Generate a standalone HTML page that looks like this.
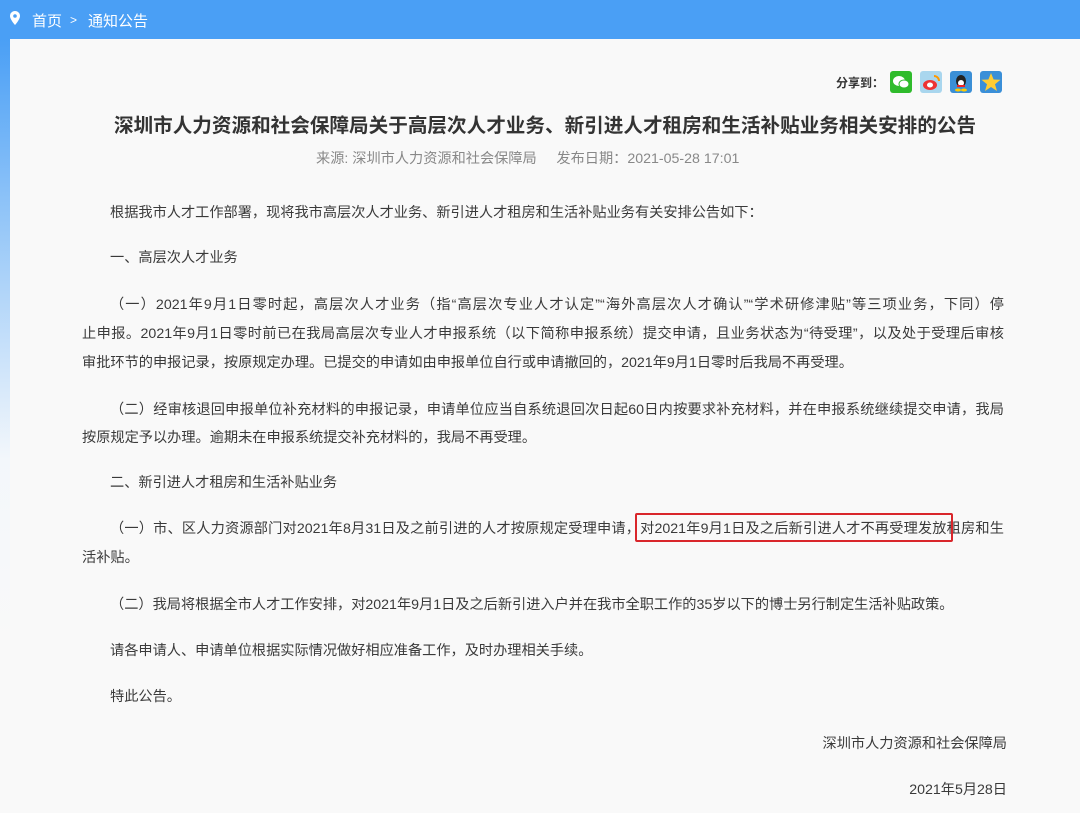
<!DOCTYPE html>
<html><head><meta charset="utf-8"><style>
body{margin:0;width:1080px;height:813px;overflow:hidden;background:#f9f9f9;font-family:"Liberation Sans","Noto Sans CJK SC",sans-serif;position:relative;color:#333}
.hdr{position:absolute;left:0;top:0;width:1080px;height:39px;background:#4a9ff5;color:#fff;font-size:15px}
.strip{position:absolute;left:0;top:39px;width:10px;height:774px;background:linear-gradient(#4a9ff5,#8cc2f8 160px,#f3f7fb 420px,#f9f9f9 600px)}
.l{position:absolute;font-size:14.2px;line-height:29px;white-space:nowrap;color:#3a3a3a;margin-top:2px}
.f{left:82px;width:922px;text-align:justify;text-align-last:justify}
.i{left:110px}
.ico{position:absolute;top:71px;width:22px;height:22px;border-radius:3px}
</style></head><body>
<div class="hdr">
<svg style="position:absolute;left:10px;top:11px" width="10" height="14" viewBox="0 0 10 14"><path d="M5 0C2.2 0 0 2.2 0 5c0 3.5 5 9 5 9s5-5.5 5-9C10 2.2 7.8 0 5 0z" fill="#fff"/><circle cx="5" cy="5" r="1.8" fill="#4a9ff5"/></svg>
<span style="position:absolute;left:32px;top:10px">首页</span>
<span style="position:absolute;left:70px;top:13px;font-size:12px">&gt;</span>
<span style="position:absolute;left:88px;top:10px">通知公告</span>
</div>
<div class="strip"></div>
<div style="position:absolute;left:836px;top:74px;font-size:12px;font-weight:bold;color:#333">分享到：</div>
<div class="ico" style="left:890px;background:#2fbb2c"><svg width="22" height="22"><ellipse cx="9" cy="10" rx="6" ry="5" fill="#fff"/><ellipse cx="14" cy="13" rx="5" ry="4" fill="#fff" stroke="#2fbb2c"/></svg></div>
<div class="ico" style="left:920px;background:#a9d6ee"><svg width="22" height="22"><ellipse cx="10" cy="14" rx="7" ry="5" fill="#e33"/><ellipse cx="10" cy="14" rx="3" ry="2.5" fill="#fff"/><path d="M14 5a5 5 0 0 1 5 5" stroke="#f90" stroke-width="2" fill="none"/></svg></div>
<div class="ico" style="left:950px;background:#3b8fd6"><svg width="22" height="22"><ellipse cx="11" cy="10" rx="5" ry="6" fill="#222"/><ellipse cx="11" cy="12" rx="3" ry="3" fill="#fff"/><rect x="7" y="14" width="8" height="2" fill="#e22"/><ellipse cx="8" cy="19" rx="3" ry="1.5" fill="#fc0"/><ellipse cx="14" cy="19" rx="3" ry="1.5" fill="#fc0"/></svg></div>
<div class="ico" style="left:980px;background:#3a8fd8"><svg width="22" height="22"><polygon points="11,2 13.6,8.5 20.5,8.8 15,13.2 17,20 11,16 5,20 7,13.2 1.5,8.8 8.4,8.5" fill="#fc3"/></svg></div>
<div style="position:absolute;left:0;width:1090px;top:112px;text-align:center;font-size:19.6px;font-weight:bold;line-height:28px;color:#333">深圳市人力资源和社会保障局关于高层次人才业务、新引进人才租房和生活补贴业务相关安排的公告</div>
<div style="position:absolute;left:316px;top:149px;font-size:14.2px;line-height:20px;color:#888;white-space:nowrap">来源: 深圳市人力资源和社会保障局&nbsp;&nbsp;&nbsp;&nbsp;&nbsp;发布日期：2021-05-28 17:01</div>
<div class="l i" style="top:197px">根据我市人才工作部署，现将我市高层次人才业务、新引进人才租房和生活补贴业务有关安排公告如下：</div>
<div class="l i" style="top:242px">一、高层次人才业务</div>
<div class="l f" style="top:289px;left:110px;width:894px">（一）2021年9月1日零时起，高层次人才业务（指“高层次专业人才认定”“海外高层次人才确认”“学术研修津贴”等三项业务，下同）停</div>
<div class="l f" style="top:318px">止申报。2021年9月1日零时前已在我局高层次专业人才申报系统（以下简称申报系统）提交申请，且业务状态为“待受理”，以及处于受理后审核</div>
<div class="l" style="top:347px;left:82px">审批环节的申报记录，按原规定办理。已提交的申请如由申报单位自行或申请撤回的，2021年9月1日零时后我局不再受理。</div>
<div class="l f" style="top:394px;left:110px;width:894px">（二）经审核退回申报单位补充材料的申报记录，申请单位应当自系统退回次日起60日内按要求补充材料，并在申报系统继续提交申请，我局</div>
<div class="l" style="top:422px;left:82px">按原规定予以办理。逾期未在申报系统提交补充材料的，我局不再受理。</div>
<div class="l i" style="top:467px">二、新引进人才租房和生活补贴业务</div>
<div class="l f" style="top:513px;left:110px;width:894px">（一）市、区人力资源部门对2021年8月31日及之前引进的人才按原规定受理申请，对2021年9月1日及之后新引进人才不再受理发放租房和生</div>
<div style="position:absolute;left:635px;top:513px;width:314px;height:25px;border:2px solid #d9262b;border-radius:2px"></div>
<div class="l" style="top:542px;left:82px">活补贴。</div>
<div class="l i" style="top:589px">（二）我局将根据全市人才工作安排，对2021年9月1日及之后新引进入户并在我市全职工作的35岁以下的博士另行制定生活补贴政策。</div>
<div class="l i" style="top:635px">请各申请人、申请单位根据实际情况做好相应准备工作，及时办理相关手续。</div>
<div class="l i" style="top:681px">特此公告。</div>
<div class="l" style="top:728px;right:73px">深圳市人力资源和社会保障局</div>
<div class="l" style="top:774px;right:73px">2021年5月28日</div>
</body></html>
